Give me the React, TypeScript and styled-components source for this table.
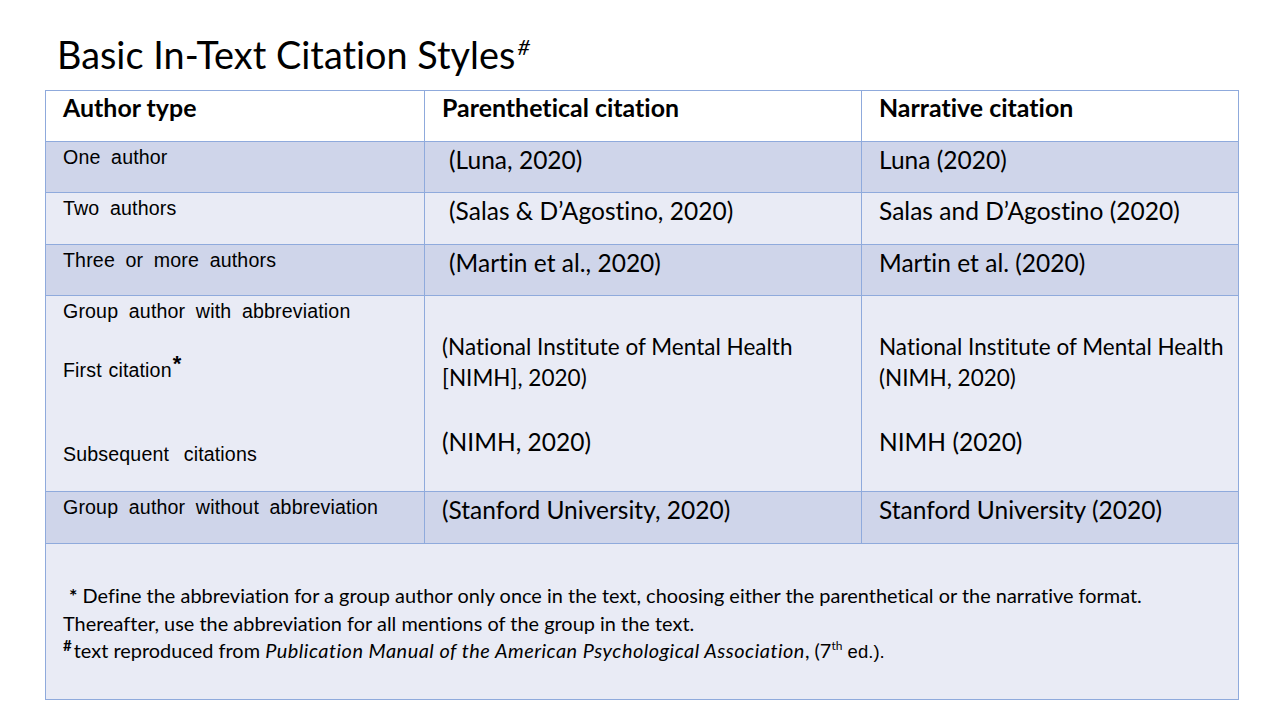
import React from "react";
import styled, { createGlobalStyle } from "styled-components";

const GlobalStyle = createGlobalStyle`
  html, body { margin: 0; padding: 0; background: #ffffff; }
  body {
    width: 1280px;
    height: 720px;
    overflow: hidden;
    font-family: Lato, "Liberation Sans", sans-serif;
    font-variant-ligatures: none;
    font-feature-settings: "liga" 0, "clig" 0, "dlig" 0, "calt" 0;
    color: #000;
  }
`;

const Slide = styled.div`
  width: 1280px;
  height: 720px;
  display: flex;
  flex-direction: column;
`;

const Title = styled.h1`
  margin: 0;
  box-sizing: border-box;
  height: 90px;
  padding: 35px 0 0 57px;
  font-family: Lato, sans-serif;
  font-weight: 400;
  font-size: 37.8px;
  line-height: 40px;
  letter-spacing: 0.02px;
`;

const TitleMark = styled.sup`
  font-size: 22px;
  vertical-align: 0;
  position: relative;
  top: -14px;
  margin-left: 2px;
  font-style: italic;
`;

const Table = styled.table`
  margin-left: 45px;
  width: 1193px;
  border-collapse: collapse;
  table-layout: fixed;
`;

type Tone = "white" | "dark" | "light";
const toneColor: Record<Tone, string> = {
  white: "#ffffff",
  dark: "#cfd5ea",
  light: "#e9ebf5",
};

const Row = styled.tr<{ $tone: Tone; $h: number }>`
  height: ${(p) => p.$h}px;
  background: ${(p) => toneColor[p.$tone]};
`;

const Cell = styled.td`
  border: 1px solid #8faadc;
  vertical-align: top;
  padding: 0 0 0 17px;
  box-sizing: border-box;
  white-space: nowrap;
`;

const HeadCell = styled(Cell)`
  font-family: Lato, sans-serif;
  font-weight: 700;
  font-size: 24.9px;
  line-height: 28px;
  padding-top: 2px;
  letter-spacing: 0.02px;
`;

const LabelCell = styled(Cell)`
  font-family: "Liberation Sans", Arial, sans-serif;
  font-size: 19.6px;
  line-height: 22px;
  padding-top: 4px;
  letter-spacing: 0.15px;
  word-spacing: 5px;
`;

const CiteCell = styled(Cell)<{ $indent?: number }>`
  font-family: Lato, sans-serif;
  font-size: 24.5px;
  line-height: 30px;
  padding-top: 3px;
  padding-left: ${(p) => p.$indent ?? 17}px;
  letter-spacing: 0.02px;
`;

const Stack = styled.div<{ $top: number; $gap?: number }>`
  margin-top: ${(p) => p.$top}px;
  word-spacing: ${(p) => p.$gap ?? 5}px;
`;

const SmallCite = styled.div<{ $top: number }>`
  margin-top: ${(p) => p.$top}px;
  font-size: 22.5px;
  line-height: 31px;
`;

const Star = styled.span`
  font-size: 22px;
  font-weight: 700;
  position: relative;
  top: -6px;
  margin-left: 1px;
`;

const NoteCell = styled(Cell)`
  font-family: Lato, sans-serif;
  font-size: 19.9px;
  line-height: 27.5px;
  padding: 38px 0 0 17px;
  letter-spacing: 0.02px;
`;

const NoteLine = styled.div<{ $indent?: number }>`
  padding-left: ${(p) => p.$indent ?? 0}px;
  white-space: nowrap;
`;

const BoldMark = styled.b`
  font-weight: 700;
`;

const SupMark = styled.span`
  font-weight: 700;
  font-size: 15px;
  position: relative;
  top: -7px;
  margin-right: 2px;
`;

const Book = styled.i`
  font-style: italic;
  letter-spacing: 0.5px;
`;

const Sup = styled.sup`
  font-size: 12px;
  vertical-align: 0;
  position: relative;
  top: -8px;
`;

const Ed = styled.span`
  font-family: "Liberation Sans", Arial, sans-serif;
  font-size: 18.5px;
`;

const rows = [
  { label: "One author", p: "(Luna, 2020)", n: "Luna (2020)", tone: "dark" as Tone, h: 51 },
  { label: "Two authors", p: "(Salas & D’Agostino, 2020)", n: "Salas and D’Agostino (2020)", tone: "light" as Tone, h: 52 },
  { label: "Three or more authors", p: "(Martin et al., 2020)", n: "Martin et al. (2020)", tone: "dark" as Tone, h: 51 },
];

export default function App() {
  return (
    <Slide>
      <GlobalStyle />
      <Title>
        Basic In-Text Citation Styles<TitleMark>#</TitleMark>
      </Title>
      <Table>
        <colgroup>
          <col style={{ width: 379 }} />
          <col style={{ width: 437 }} />
          <col style={{ width: 377 }} />
        </colgroup>
        <tbody>
          <Row $tone="white" $h={51}>
            <HeadCell>Author type</HeadCell>
            <HeadCell>Parenthetical citation</HeadCell>
            <HeadCell>Narrative citation</HeadCell>
          </Row>
          {rows.map((r) => (
            <Row key={r.label} $tone={r.tone} $h={r.h}>
              <LabelCell>{r.label}</LabelCell>
              <CiteCell $indent={24}>{r.p}</CiteCell>
              <CiteCell>{r.n}</CiteCell>
            </Row>
          ))}
          <Row $tone="light" $h={196}>
            <LabelCell>
              <div>Group author with abbreviation</div>
              <Stack $top={37} $gap={1}>
                First citation
                <Star>*</Star>
              </Stack>
              <Stack $top={62} $gap={9}>Subsequent citations</Stack>
            </LabelCell>
            <CiteCell>
              <SmallCite $top={32}>
                (National Institute of Mental Health
                <br />
                [NIMH], 2020)
              </SmallCite>
              <Stack $top={34} $gap={0}>(NIMH, 2020)</Stack>
            </CiteCell>
            <CiteCell>
              <SmallCite $top={32}>
                National Institute of Mental Health
                <br />
                (NIMH, 2020)
              </SmallCite>
              <Stack $top={34} $gap={0}>NIMH (2020)</Stack>
            </CiteCell>
          </Row>
          <Row $tone="dark" $h={52}>
            <LabelCell>Group author without abbreviation</LabelCell>
            <CiteCell>(Stanford University, 2020)</CiteCell>
            <CiteCell>Stanford University (2020)</CiteCell>
          </Row>
          <Row $tone="light" $h={156}>
            <NoteCell colSpan={3}>
              <NoteLine $indent={6}>
                <BoldMark>*</BoldMark> Define the abbreviation for a group author only once in the text,
                choosing either the parenthetical or the narrative format.
              </NoteLine>
              <NoteLine>
                Thereafter, use the abbreviation for all mentions of the group in the text.
              </NoteLine>
              <NoteLine>
                <SupMark>#</SupMark>text reproduced from{" "}
                <Book>Publication Manual of the American Psychological Association</Book>, (7
                <Sup>th</Sup> <Ed>ed.).</Ed>
              </NoteLine>
            </NoteCell>
          </Row>
        </tbody>
      </Table>
    </Slide>
  );
}
